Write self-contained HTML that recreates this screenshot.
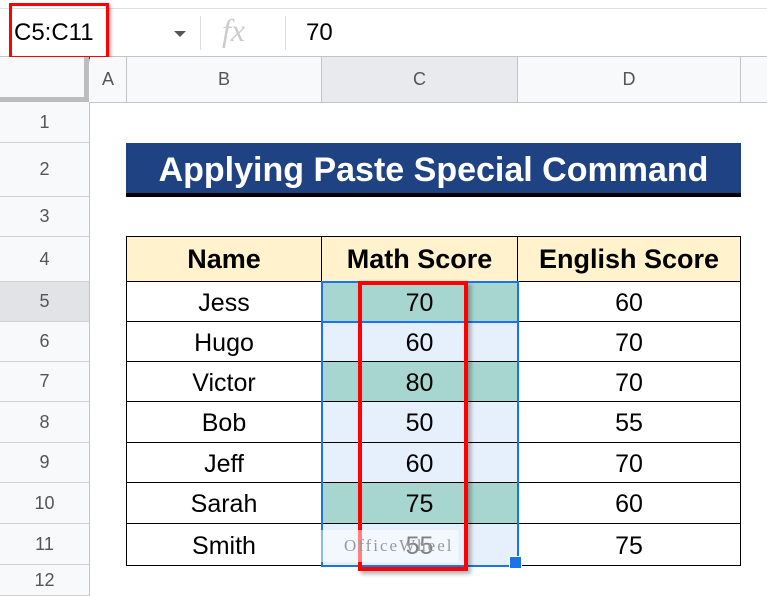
<!DOCTYPE html>
<html><head><style>
body{margin:0;width:767px;height:587px;overflow:hidden;background:#fff;font-family:"Liberation Sans",Arial,sans-serif;position:relative}
.a{position:absolute}
.rh{position:absolute;left:0;width:89px;text-align:center;color:#555;font-size:18px;border-bottom:1px solid #d0d0d0;background:#f8f9fa;border-right:1px solid #c4c4c4}
.ch{position:absolute;top:57px;height:45px;line-height:45px;text-align:center;color:#555;font-size:18px;background:#f8f9fa;border-right:1px solid #c4c4c4;border-bottom:1px solid #c4c4c4}
.c{position:absolute;text-align:center;font-size:25px;color:#000;border-right:1px solid #000;border-bottom:1px solid #000;box-sizing:border-box}
.h{font-weight:bold;font-size:27px;background:#fff2cc;height:45px;line-height:44px;top:237px}
</style></head><body>
<div class="a" style="left:0;top:0;width:767px;height:8px;border-bottom:1px solid #e0e0e0"></div>
<div class="a" style="left:0;top:56px;width:767px;height:1px;background:#c4c4c4"></div>
<div class="a" style="left:14px;top:19px;font-size:24px;color:#000">C5:C11</div>
<div class="a" style="left:9px;top:3px;width:94px;height:50px;border:3px solid #f00;box-shadow:2px 2px 3px rgba(0,0,0,.3)"></div>
<div class="a" style="left:174px;top:31px;width:0;height:0;border-left:6px solid transparent;border-right:6px solid transparent;border-top:6px solid #555"></div>
<div class="a" style="left:200px;top:16px;width:1px;height:34px;background:#ddd"></div>
<div class="a" style="left:222px;top:12px;font-size:32px;color:#ccc;font-family:'Liberation Serif',serif;font-style:italic">fx</div>
<div class="a" style="left:285px;top:16px;width:1px;height:34px;background:#ddd"></div>
<div class="a" style="left:306px;top:19px;font-size:24px">70</div>

<div class="a" style="left:0;top:57px;width:84px;height:40px;background:#f8f9fa;border-right:5px solid #bdbdbd;border-bottom:5px solid #bdbdbd"></div>
<div class="ch" style="left:90px;width:36px">A</div>
<div class="ch" style="left:127px;width:194px">B</div>
<div class="ch" style="left:322px;width:195px;background:#e8eaed">C</div>
<div class="ch" style="left:518px;width:222px">D</div>
<div class="ch" style="left:741px;width:30px"></div>

<div class="rh" style="top:102px;height:40px;line-height:40px">1</div>
<div class="rh" style="top:143px;height:53px;line-height:53px">2</div>
<div class="rh" style="top:197px;height:39px;line-height:39px">3</div>
<div class="rh" style="top:237px;height:44px;line-height:44px">4</div>
<div class="rh" style="top:282px;height:39px;line-height:39px;background:#e1e3e6">5</div>
<div class="rh" style="top:322px;height:39px;line-height:39px">6</div>
<div class="rh" style="top:362px;height:39px;line-height:39px">7</div>
<div class="rh" style="top:402px;height:40px;line-height:40px">8</div>
<div class="rh" style="top:443px;height:39px;line-height:39px">9</div>
<div class="rh" style="top:483px;height:40px;line-height:40px">10</div>
<div class="rh" style="top:524px;height:40px;line-height:40px">11</div>
<div class="rh" style="top:565px;height:30px;line-height:30px">12</div>

<div class="a" style="left:126px;top:143px;width:615px;height:50px;background:#1f4283;border-bottom:4px solid #000;color:#fff;font-weight:bold;font-size:34px;text-align:center;line-height:54px">Applying Paste Special Command</div>

<div class="a" style="left:126px;top:236px;width:615px;height:330px;border-left:1px solid #000;border-top:1px solid #000;box-sizing:border-box"></div>
<div class="c h" style="left:127px;width:195px">Name</div>
<div class="c h" style="left:322px;width:196px">Math Score</div>
<div class="c h" style="left:518px;width:223px">English Score</div>

<div class="c" style="left:127px;top:282px;width:195px;height:40px;line-height:42px">Jess</div>
<div class="c" style="left:322px;top:282px;width:196px;height:40px;line-height:42px;background:#a7d5cf">70</div>
<div class="c" style="left:518px;top:282px;width:223px;height:40px;line-height:42px">60</div>
<div class="c" style="left:127px;top:322px;width:195px;height:40px;line-height:42px">Hugo</div>
<div class="c" style="left:322px;top:322px;width:196px;height:40px;line-height:42px;background:#e6effc">60</div>
<div class="c" style="left:518px;top:322px;width:223px;height:40px;line-height:42px">70</div>
<div class="c" style="left:127px;top:362px;width:195px;height:40px;line-height:42px">Victor</div>
<div class="c" style="left:322px;top:362px;width:196px;height:40px;line-height:42px;background:#a7d5cf">80</div>
<div class="c" style="left:518px;top:362px;width:223px;height:40px;line-height:42px">70</div>
<div class="c" style="left:127px;top:402px;width:195px;height:41px;line-height:43px">Bob</div>
<div class="c" style="left:322px;top:402px;width:196px;height:41px;line-height:43px;background:#e6effc">50</div>
<div class="c" style="left:518px;top:402px;width:223px;height:41px;line-height:43px">55</div>
<div class="c" style="left:127px;top:443px;width:195px;height:40px;line-height:42px">Jeff</div>
<div class="c" style="left:322px;top:443px;width:196px;height:40px;line-height:42px;background:#e6effc">60</div>
<div class="c" style="left:518px;top:443px;width:223px;height:40px;line-height:42px">70</div>
<div class="c" style="left:127px;top:483px;width:195px;height:41px;line-height:43px">Sarah</div>
<div class="c" style="left:322px;top:483px;width:196px;height:41px;line-height:43px;background:#a7d5cf">75</div>
<div class="c" style="left:518px;top:483px;width:223px;height:41px;line-height:43px">60</div>
<div class="c" style="left:127px;top:524px;width:195px;height:42px;line-height:44px">Smith</div>
<div class="c" style="left:322px;top:524px;width:196px;height:42px;line-height:44px;background:#e6effc">55</div>
<div class="c" style="left:518px;top:524px;width:223px;height:42px;line-height:44px">75</div>

<div class="a" style="left:321px;top:281px;width:194px;height:282px;border:2px solid #1a73e8"></div>
<div class="a" style="left:321px;top:281px;width:194px;height:38px;border:2px solid #1a73e8"></div>
<div class="a" style="left:509px;top:556px;width:11px;height:11px;background:#1a73e8;border:1px solid #fff"></div>
<div class="a" style="left:358px;top:281px;width:102px;height:282px;border:4px solid #f00;box-shadow:3px 3px 4px rgba(0,0,0,.3)"></div>
<div class="a" style="left:310px;top:530px;width:148px;height:32px;background:rgba(255,255,255,.5);color:#999;font-family:'Liberation Serif',serif;font-size:17px;line-height:32px;padding-left:34px;box-sizing:border-box;letter-spacing:2px">OfficeWheel</div>
</body></html>
